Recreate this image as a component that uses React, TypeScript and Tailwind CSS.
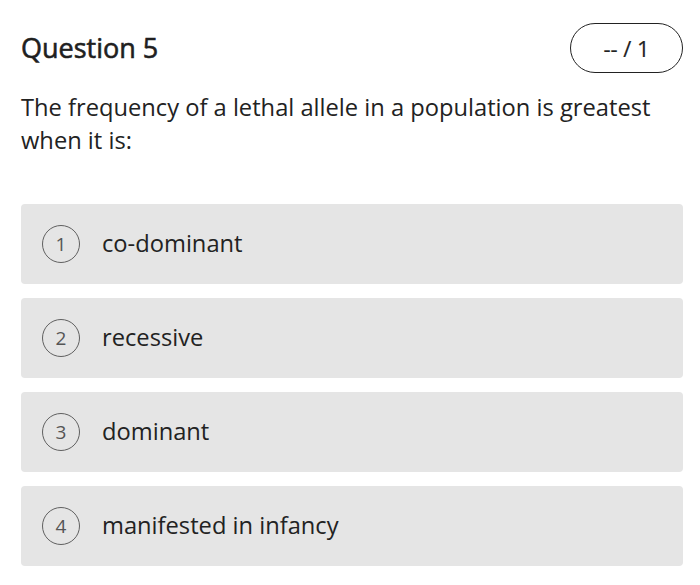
import React from "react";

const options = ["co-dominant", "recessive", "dominant", "manifested in infancy"];

export default function App() {
  return (
    <div className="w-[700px] h-[585px] bg-white text-[#222222]" style={{ fontFamily: '"Open Sans", sans-serif' }}>
      <div className="pl-[21px] pr-[17px] pt-[23px]">
        <div className="flex items-center justify-between">
          <h1 className="text-[27px] font-normal leading-[34px] text-[#1f1f1f] [-webkit-text-stroke:0.6px_#1f1f1f]">Question 5</h1>
          <div className="w-[113px] h-[50px] rounded-full border-[1.5px] border-[#222222] flex items-center justify-center text-[22px] text-[#222222] [-webkit-text-stroke:0.2px_#222222]">
            -- / 1
          </div>
        </div>
        <p className="mt-[18px] text-[23.7px] leading-[33px] text-[#222222]">
          The frequency of a lethal allele in a population is greatest when it is:
        </p>
        <div className="mt-[47px] flex flex-col gap-[14px]">
          {options.map((o, i) => (
            <div key={o} className="h-[80px] rounded-[4px] bg-[#e5e5e5] flex items-center pl-[21px]">
              <div className="w-[38px] h-[38px] rounded-full border-[1.5px] border-[#606060] flex items-center justify-center text-[19px] text-[#555555]">
                {i + 1}
              </div>
              <span className="ml-[22px] text-[23.7px] text-[#222222]">{o}</span>
            </div>
          ))}
        </div>
      </div>
    </div>
  );
}
